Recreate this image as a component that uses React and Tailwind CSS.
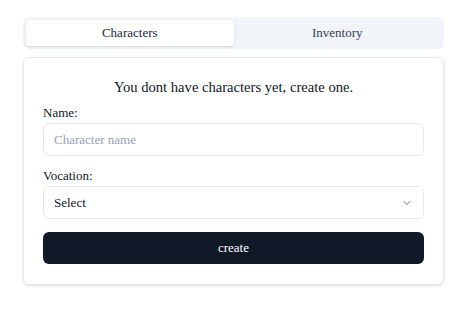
import React from "react";

export default function App() {
  return (
    <div className="w-[474px] h-[319px] bg-white" style={{ fontFamily: '"Liberation Serif", serif' }}>
      <div className="pt-[17px] pl-[23px]">
        <div className="w-[421px]">
          <div className="grid grid-cols-2 h-[32px] rounded-md bg-[#f1f5f9] p-[3px] text-[13px] text-[#1e293b]">
            <div className="flex items-center justify-center rounded-[4px] bg-white shadow-sm">Characters</div>
            <div className="flex items-center justify-center text-[#334155]">Inventory</div>
          </div>
          <div className="mt-[8px] rounded-md border border-[#e5e7eb] shadow-sm px-[19px] pt-[17px] pb-[20px]">
            <p className="text-center text-[14.6px] leading-[24px] text-[#111827]">You dont have characters yet, create one.</p>
            <label className="block mt-[6px] text-[13px] leading-[16px] text-[#111827]">Name:</label>
            <div className="mt-[2px] h-[33px] rounded-md border border-[#e2e8f0] flex items-center px-[10px] text-[13px] text-[#94a3b8]">Character name</div>
            <label className="block mt-[12px] text-[13px] leading-[16px] text-[#111827]">Vocation:</label>
            <div className="mt-[2px] h-[33px] rounded-md border border-[#e2e8f0] flex items-center justify-between px-[10px] text-[13px] text-[#111827]">
              <span>Select</span>
              <svg width="12" height="12" viewBox="0 0 24 24" fill="none" stroke="#6b7280" strokeWidth="2" strokeLinecap="round" strokeLinejoin="round"><path d="m6 9 6 6 6-6" /></svg>
            </div>
            <div className="mt-[13px] h-[32px] rounded-md bg-[#111827] flex items-center justify-center text-[13px] text-white">create</div>
          </div>
        </div>
      </div>
    </div>
  );
}
